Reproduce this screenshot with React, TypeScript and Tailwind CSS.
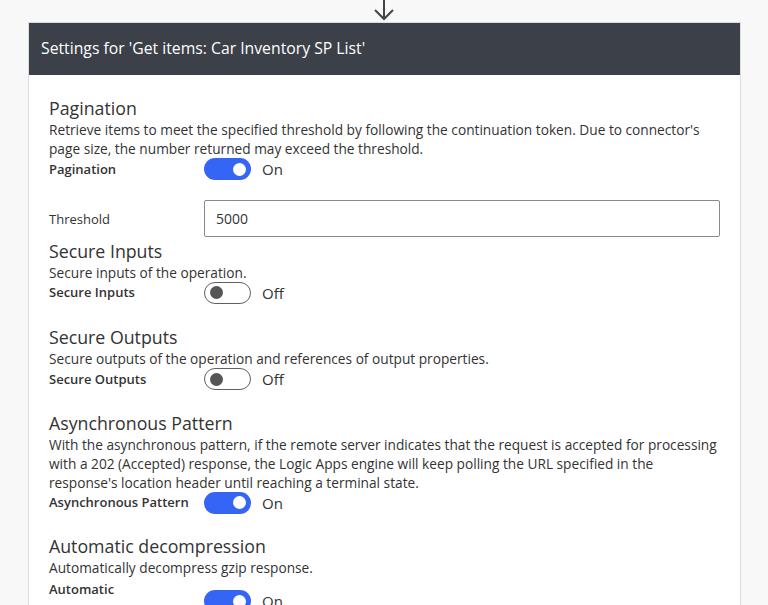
import React from "react";

const font = { fontFamily: '"Open Sans", "Noto Sans", sans-serif' };

function Toggle({ on }: { on: boolean }) {
  return (
    <div className="flex items-center gap-[11px]">
      {on ? (
        <div className="flex h-[22px] w-[47px] items-center justify-end rounded-full bg-[#3465f4] pr-[5px]">
          <div className="h-[13px] w-[13px] rounded-full bg-white" />
        </div>
      ) : (
        <div className="flex h-[22px] w-[47px] items-center rounded-full border border-[#5f5f5f] bg-white pl-[5px]">
          <div className="h-[13px] w-[13px] rounded-full bg-[#555]" />
        </div>
      )}
      <span className="text-[15px] text-[#333]">{on ? "On" : "Off"}</span>
    </div>
  );
}

function Section({
  title,
  desc,
  label,
  on,
  className = "",
  labelClass = "leading-[19px]",
}: {
  title: string;
  desc: string;
  label: string;
  on: boolean;
  className?: string;
  labelClass?: string;
}) {
  return (
    <div className={className}>
      <h2 className="text-[17.75px] leading-[24px] text-[#333]">{title}</h2>
      <p className="text-[13.7px] leading-[19px] text-[#333]">{desc}</p>
      <div className="flex items-center">
        <div className={`w-[155px] text-[13px] font-semibold text-[#333] ${labelClass}`}>{label}</div>
        <Toggle on={on} />
      </div>
    </div>
  );
}

export default function App() {
  return (
    <div className="h-[605px] overflow-hidden bg-[#f8f8f8]" style={font}>
      <div className="flex h-[22px] justify-center">
        <svg width="24" height="22" viewBox="0 0 24 22" fill="none" stroke="#444" strokeWidth="2">
          <path d="M12 0 V19" />
          <path d="M3 10 L12 19 L21 10" />
        </svg>
      </div>
      <div className="mx-[28px] w-[713px] border border-[#dcdcdc] bg-white">
        <div className="flex h-[52px] items-center bg-[#3b4049] pl-[12px] text-[15.75px] text-white">
          Settings for 'Get items: Car Inventory SP List'
        </div>
        <div className="pl-[20px] pr-[20px] pt-[21px]">
          <Section
            title="Pagination"
            desc="Retrieve items to meet the specified threshold by following the continuation token. Due to connector's page size, the number returned may exceed the threshold."
            label="Pagination"
            on
          />
          <div className="mt-[19px] flex items-center">
            <div className="w-[155px] pt-[3px] text-[13px] text-[#333]">Threshold</div>
            <div className="flex h-[37px] flex-1 items-center rounded-[2px] border border-[#8a8a8a] px-[11px] text-[14px] text-[#333]">
              5000
            </div>
          </div>
          <Section
            className="mt-[2px]"
            title="Secure Inputs"
            desc="Secure inputs of the operation."
            label="Secure Inputs"
            on={false}
          />
          <Section
            className="mt-[21px]"
            title="Secure Outputs"
            desc="Secure outputs of the operation and references of output properties."
            label="Secure Outputs"
            on={false}
          />
          <Section
            className="mt-[20px]"
            title="Asynchronous Pattern"
            desc="With the asynchronous pattern, if the remote server indicates that the request is accepted for processing with a 202 (Accepted) response, the Logic Apps engine will keep polling the URL specified in the response's location header until reaching a terminal state."
            label="Asynchronous Pattern"
            on
          />
          <Section
            className="mt-[20px]"
            title="Automatic decompression"
            desc="Automatically decompress gzip response."
            label="Automatic decompression"
            labelClass="leading-[24px]"
            on
          />
        </div>
      </div>
    </div>
  );
}
